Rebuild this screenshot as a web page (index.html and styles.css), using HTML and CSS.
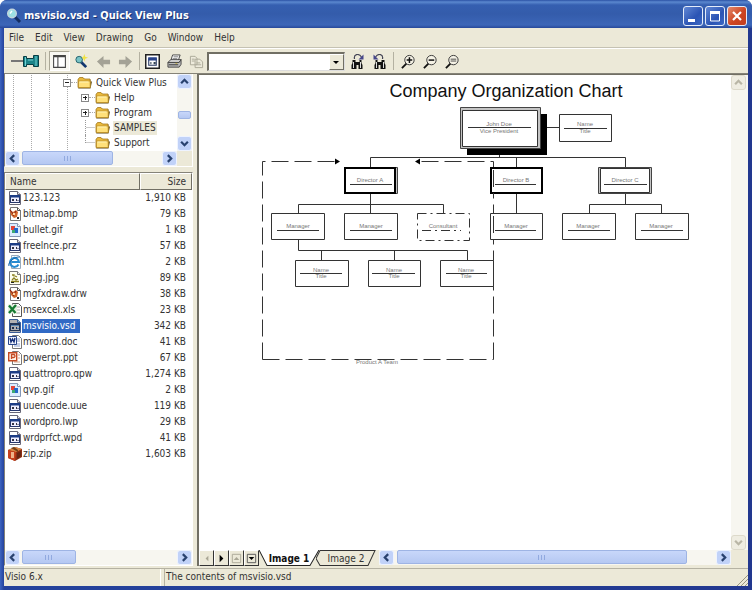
FILE: index.html
```html
<!DOCTYPE html>
<html lang="en">
<head>
<meta charset="utf-8">
<title>msvisio.vsd - Quick View Plus</title>
<link rel="stylesheet" href="styles.css">
</head>
<body>
<svg class="defs" aria-hidden="true">
  <symbol id="folder" viewBox="0 0 15 14">
    <path d="M1 3.5 2.5 2h4L8 3.5h5.5v2H15L13.500 12.500h-12L1 12z" fill="#5d4a1c"/>
    <path d="M1 3.500 2.500 1.500h3.500L7.500 3H13v8.500H1z" fill="#e9b93d" stroke="#a57a1e" stroke-width=".8"/>
    <path d="M1.500 5h11.700v6.500H1.500z" fill="#ffe07a" stroke="#b88b26" stroke-width=".8"/>
    <path d="M2.500 6h9" stroke="#fff3b8"/>
  </symbol>
  <symbol id="generic" viewBox="0 0 14 14">
    <path d="M1.500.5h8l3 3v10h-11z" fill="#fff" stroke="#667"/>
    <path d="M9.500.5v3h3" fill="#dde" stroke="#667"/>
    <rect x="2.500" y="4.500" width="9" height="7" fill="#eef" stroke="#27376c"/>
    <path d="M2 4h10v2.500H2z" fill="#1c3c86"/>
    <path d="M4 8h2v2H4zM8 8h1v2H8zM9.500 9h1v1h-1z" fill="#334"/>
  </symbol>
  <symbol id="drawing" viewBox="0 0 14 14">
    <path d="M2.500.5h7l3 3v10h-10z" fill="#fff" stroke="#777"/>
    <path d="m9.500.5v3h3" fill="none" stroke="#555"/>
    <path d="M1 1.500 5 5l3-2 2 2-1 5-3 1-3-3z" fill="#d4672a"/>
    <path d="m2 3 4 5m2-4-3 5" stroke="#722" fill="none"/>
    <path d="M5 6h2v2H5z" fill="#ffd7a5"/><path d="M9 10h2v2H9z" fill="#333"/>
  </symbol>
  <symbol id="gif" viewBox="0 0 14 14">
    <path d="M1.500.5h8l3 3v10h-11z" fill="#dcecff" stroke="#8496b5"/>
    <path d="M3 3h4v4H3z" fill="#e2453a"/><path d="M6 5h4v5H6z" fill="#2467c9"/><path d="M4 7h3v3H4z" fill="#3daa73"/><path d="M9.500.5v3h3" fill="#fff" stroke="#8496b5"/>
  </symbol>
  <symbol id="html" viewBox="0 0 14 14">
    <path d="M3.500.5h7l2 2v11h-9z" fill="#fff" stroke="#9ab"/>
    <path d="M10.500 9.500A4.500 4.500 0 1 1 11 7H3.500" fill="none" stroke="#278bd1" stroke-width="2"/>
    <path d="M1 11C-1 8 7 1 12 2" fill="none" stroke="#1c65a8"/>
  </symbol>
  <symbol id="jpg" viewBox="0 0 14 14">
    <path d="M1.500.5h8l3 3v10h-11z" fill="#fffff0" stroke="#777"/>
    <path d="M9.500.5v3h3" fill="#eee" stroke="#777"/>
    <path d="M3 10.500h8M4 9l2-2 2 2 2-1M4 4h2v1.500M7 5l2 1" fill="none" stroke="#8a801d" stroke-width="1.300"/><path d="M3 11h3v1H3z" fill="#222"/>
  </symbol>
  <symbol id="excel" viewBox="0 0 14 14">
    <path d="M4.500.5h6l3 3v10h-9z" fill="#fff" stroke="#555"/><path d="M8 4h4M8 7h4M8 10h4" stroke="#aaa"/>
    <path d="M0 1.500h9v9H0z" fill="#e3f0df"/><path d="m1 2.500 6.500 7.500M8 2 1 10" stroke="#167a32" stroke-width="2.300"/>
  </symbol>
  <symbol id="word" viewBox="0 0 14 14">
    <path d="M4.500.5h6l3 3v10h-9z" fill="#fff" stroke="#777"/><path d="M9 4h3M9 6h3M6 9h6M6 11h6" stroke="#8ba0cb"/>
    <path d="M.5 1.500h8v8h-8z" fill="#f2f5ff" stroke="#28468b"/><path d="m2 3 1 4 1.500-3L6 7l1-4" fill="none" stroke="#142f78" stroke-width="1.400"/>
  </symbol>
  <symbol id="ppt" viewBox="0 0 14 14">
    <path d="M4.500.5h6l3 3v10h-9z" fill="#fff" stroke="#777"/><path d="M10 4h2M10 7h2M6 11h6" stroke="#d3a68d"/>
    <path d="M.7 1.700h8v8h-8z" fill="#fff4ea" stroke="#c54a22" stroke-width="1.400"/><path d="M3.500 8V3.500h2a1.500 1.500 0 0 1 0 3h-2" fill="none" stroke="#c54a22" stroke-width="1.300"/>
  </symbol>
  <symbol id="zip" viewBox="0 0 14 14">
    <path d="m0 3 7-3 7 2v8l-7 4-7-3z" fill="#8f2e13"/><path d="m0 3 7-3 7 2-6 3z" fill="#d98745"/><path d="m0 3 8 2-1 9-7-3z" fill="#c7401c"/><path d="M3 5h3v6H3z" fill="#efb28a"/><path d="m9 6 4-2v5l-4 3z" fill="#662614"/><path d="m6 0 4 3v2L3 1" fill="#714019"/>
  </symbol>
  <symbol id="lens" viewBox="0 0 16 16">
    <path d="m9 9 5 5" stroke="#142d62" stroke-width="3"/><circle cx="6" cy="5.500" r="4.300" fill="#9ce0e3" stroke="#c3d6dd" stroke-width="1.400"/><path d="M4 5.500 6 3" stroke="#fff" stroke-width="1.300"/>
  </symbol>
  <symbol id="binoc" viewBox="0 0 14 15">
    <path d="M2 6h3v2h4V6h2v3l1 2v4H8v-4H6v4H1v-4l1-2z" fill="#111"/><path d="M3 8v6M10 8v6" stroke="#ddd"/>
    <path d="M4 5C3 0 8-1 11 3" fill="none" stroke="#445" stroke-width="1.200"/><path d="M13 .5v5H8z" fill="#46468a"/>
  </symbol>
  <symbol id="chev" viewBox="0 0 8 8"><path d="M5.500 1 2.500 4l3 3" fill="none" stroke="currentColor" stroke-width="2"/></symbol>
</svg>

<main class="window">
  <header class="titlebar">
    <svg class="app-icon"><use href="#lens"/></svg>
    <h1>msvisio.vsd - Quick View Plus</h1>
    <div class="caption-buttons">
      <button class="cap" aria-label="Minimize"><svg viewBox="0 0 18 18"><path d="M4 12h7v3H4z" fill="#fff"/></svg></button>
      <button class="cap" aria-label="Maximize"><svg viewBox="0 0 18 18"><path d="M4.500 5h9v9h-9z" fill="none" stroke="#fff"/><path d="M4 4h10v3H4z" fill="#fff"/></svg></button>
      <button class="cap close" aria-label="Close"><svg viewBox="0 0 18 18"><path d="m5 5 8 8m0-8-8 8" stroke="#fff" stroke-width="2.200"/></svg></button>
    </div>
  </header>

  <nav class="menubar" aria-label="Main menu">
    <button>File</button><button>Edit</button><button>View</button><button>Drawing</button><button>Go</button><button>Window</button><button>Help</button>
  </nav>

  <div class="toolbar" role="toolbar" aria-label="Tools">
    <button class="tool pin" aria-label="Keep on top"><svg viewBox="0 0 28 16"><path d="M0 8h14" stroke="#777" stroke-width="2"/><path d="M12.500 3.500h3v2h7v-3h5v11h-5v-2h-7v2h-3z" fill="#1b8489" stroke="#083e45"/><path d="M14.500 4v9M17 7h5m3-4v10" stroke="#72d0d2"/></svg></button>
    <span class="sep"></span>
    <button class="tool pressed" aria-label="Toggle panes"><svg viewBox="0 0 14 14"><path d="M1.500 1.500h11v11h-11zM5.500 1v12M1 2.500h12" fill="#fff" stroke="#444"/></svg></button>
    <button class="tool" aria-label="Find file"><svg viewBox="0 0 16 16"><path d="m7 8 6 6" stroke="#12376e" stroke-width="3"/><circle cx="5.500" cy="6" r="3.500" fill="#79c3c5" stroke="#23616c"/><path d="m11 0 1 3 3 1-3 1-1 3-1-3-2-1 2-1z" fill="#f1e343"/></svg></button>
    <button class="tool" aria-label="Back"><svg viewBox="0 0 16 16"><path d="m1 8 7-6v4h7v5H8v4z" fill="#a4a296"/></svg></button>
    <button class="tool" aria-label="Forward"><svg viewBox="0 0 16 16"><path d="m15 8-7-6v4H1v5h7v4z" fill="#a4a296"/></svg></button>
    <span class="sep tight"></span>
    <button class="tool" aria-label="View file"><svg viewBox="0 0 14 14"><path d="M.7.700h12.600v12.600H.7z" fill="#fff" stroke="#222" stroke-width="1.400"/><path d="M3.500 4.500h7v6h-7z" fill="#fff" stroke="#25365f"/><path d="M3 3h8v3H3z" fill="#28428a"/><path d="M5 7.500h1v2H5zM8 7.500h2v2H8z" fill="#345"/></svg></button>
    <button class="tool" aria-label="Print"><svg viewBox="0 0 16 16"><path d="M4 7 6 1h8l-2 6" fill="#fff" stroke="#444"/><path d="M7 3h5M6 5h5" stroke="#777"/><path d="m1 9 3-3h11l-2 3z" fill="#ddd" stroke="#444"/><path d="M1 9h12l2-3v5l-2 3H1z" fill="#bbb" stroke="#444"/><path d="M2 11.500h10" stroke="#333"/><path d="M9 10h2" stroke="#ba4"/></svg></button>
    <button class="tool" aria-label="Copy"><svg viewBox="0 0 16 16"><path d="M1.500 2.500h5l2 2v7h-7zM6.500 5.500h5l3 3v6h-8z" fill="#eeebdc" stroke="#aaa796"/><path d="M3 5.500h3M3 7.500h3M8 9.500h4M8 11.500h5" stroke="#aaa796"/></svg></button>
    <div class="combo"><select aria-label="Search text"></select><span class="combo-arrow"></span></div>
    <button class="tool" aria-label="Find next"><svg viewBox="0 0 14 15"><use href="#binoc"/></svg></button>
    <button class="tool flip" aria-label="Find previous"><svg viewBox="0 0 14 15"><use href="#binoc"/></svg></button>
    <span class="sep"></span>
    <button class="tool" aria-label="Zoom in"><svg viewBox="0 0 16 16"><path d="m1 15 5-5" stroke="#111" stroke-width="2"/><circle cx="9" cy="6.500" r="5" fill="#f5f2e5" stroke="#333"/><path d="M6 6.500h6M9 3.500v6" stroke="#111" stroke-width="1.600"/></svg></button>
    <button class="tool" aria-label="Zoom out"><svg viewBox="0 0 16 16"><path d="m1 15 5-5" stroke="#111" stroke-width="2"/><circle cx="9" cy="6.500" r="5" fill="#f5f2e5" stroke="#333"/><path d="M6 6.500h6" stroke="#111" stroke-width="1.600"/></svg></button>
    <button class="tool" aria-label="Original size"><svg viewBox="0 0 16 16"><path d="m1 15 5-5" stroke="#111" stroke-width="2"/><circle cx="9" cy="6.500" r="5" fill="#f5f2e5" stroke="#333"/><path d="M6 5.500h6M6 7.500h6" stroke="#444"/></svg></button>
  </div>

  <div class="work">
    <aside class="side">
      <section class="tree" aria-label="Folders">
        <div class="tree-view">
          <ul>
            <li class="root"><button class="box minus" aria-label="Collapse"></button><i class="stub"></i><svg><use href="#folder"/></svg><span>Quick View Plus</span></li>
            <li><button class="box plus" aria-label="Expand"></button><i class="stub"></i><svg><use href="#folder"/></svg><span>Help</span></li>
            <li><button class="box plus" aria-label="Expand"></button><i class="stub"></i><svg><use href="#folder"/></svg><span>Program</span></li>
            <li><i class="branch"></i><svg><use href="#folder"/></svg><span class="current">SAMPLES</span></li>
            <li><i class="branch last"></i><svg><use href="#folder"/></svg><span>Support</span></li>
          </ul>
        </div>
        <div class="vscroll">
          <button class="sb up" aria-label="Scroll up"><svg><use href="#chev"/></svg></button>
          <div class="track"><i class="thumb"></i></div>
          <button class="sb down" aria-label="Scroll down"><svg><use href="#chev"/></svg></button>
        </div>
        <div class="hscroll">
          <button class="sb" aria-label="Scroll left"><svg><use href="#chev"/></svg></button>
          <div class="track"><i class="thumb grip tree-thumb"></i></div>
          <button class="sb right" aria-label="Scroll right"><svg><use href="#chev"/></svg></button>
        </div>
      </section>

      <section class="files" aria-label="Files">
        <table>
          <thead><tr><th>Name</th><th class="size">Size</th></tr></thead>
          <tbody>
            <tr><td><svg><use href="#generic"/></svg><span>123.123</span></td><td>1,910 KB</td></tr>
            <tr><td><svg><use href="#drawing"/></svg><span>bitmap.bmp</span></td><td>79 KB</td></tr>
            <tr><td><svg><use href="#gif"/></svg><span>bullet.gif</span></td><td>1 KB</td></tr>
            <tr><td><svg><use href="#generic"/></svg><span>freelnce.prz</span></td><td>57 KB</td></tr>
            <tr><td><svg><use href="#html"/></svg><span>html.htm</span></td><td>2 KB</td></tr>
            <tr><td><svg><use href="#jpg"/></svg><span>jpeg.jpg</span></td><td>89 KB</td></tr>
            <tr><td><svg><use href="#drawing"/></svg><span>mgfxdraw.drw</span></td><td>38 KB</td></tr>
            <tr><td><svg><use href="#excel"/></svg><span>msexcel.xls</span></td><td>23 KB</td></tr>
            <tr class="selected"><td><svg><use href="#generic"/></svg><span>msvisio.vsd</span></td><td>342 KB</td></tr>
            <tr><td><svg><use href="#word"/></svg><span>msword.doc</span></td><td>41 KB</td></tr>
            <tr><td><svg><use href="#ppt"/></svg><span>powerpt.ppt</span></td><td>67 KB</td></tr>
            <tr><td><svg><use href="#generic"/></svg><span>quattropro.qpw</span></td><td>1,274 KB</td></tr>
            <tr><td><svg><use href="#gif"/></svg><span>qvp.gif</span></td><td>2 KB</td></tr>
            <tr><td><svg><use href="#generic"/></svg><span>uuencode.uue</span></td><td>119 KB</td></tr>
            <tr><td><svg><use href="#generic"/></svg><span>wordpro.lwp</span></td><td>29 KB</td></tr>
            <tr><td><svg><use href="#generic"/></svg><span>wrdprfct.wpd</span></td><td>41 KB</td></tr>
            <tr><td><svg><use href="#zip"/></svg><span>zip.zip</span></td><td>1,603 KB</td></tr>
          </tbody>
        </table>
        <div class="hscroll">
          <button class="sb" aria-label="Scroll left"><svg><use href="#chev"/></svg></button>
          <div class="track"><i class="thumb grip list-thumb"></i></div>
          <button class="sb right" aria-label="Scroll right"><svg><use href="#chev"/></svg></button>
        </div>
      </section>
    </aside>

    <section class="viewer" aria-label="Drawing">
      <div class="canvas">
        <svg class="chart" viewBox="199 75 531 474" width="531" height="474" role="img" aria-label="Company Organization Chart">
          <text class="chart-title" x="506" y="97">Company Organization Chart</text>
          <g class="wire">
            <path d="M499.500 155v2.500M370.500 167v-9.500h255V167M516.500 157.500V167M547 127.500h12"/>
            <path d="M370.500 194v19M298.500 213v-8.500h145v8.500M516.500 194v19M625.500 194v10.500M589.500 213v-8.500h72v8.500"/>
            <path d="M298.500 240v10.500h169v10M321.500 250.500v10M394.500 250.500v10"/>
          </g>
          <g class="team">
            <path d="M262.500 359.500v-198H336M493.500 359.500v-198H419M262.500 359.500h231"/>
          </g>
          <path d="M335 158.500v6l5-3zM420 158.500v6l-5-3z"/>
          <path d="M467 114h80v41h-80z"/>
          <path class="double" d="M460.500 107.500h80v41h-80z"/>
          <path class="box-line" d="M462.500 110.500h75v36h-75z"/>
          <path class="box-line" d="M559.500 114.500h52v27h-52zM271.500 213.500h53v26h-53zM344.500 213.500h53v26h-53zM490.500 213.500h52v26h-52zM562.500 213.500h53v26h-53zM635.500 213.500h53v26h-53zM295.500 260.500h53v26h-53zM368.500 260.500h52v26h-52zM440.500 260.500h53v26h-53z"/>
          <path class="double" d="M344.500 167.500h53v26h-53zM598.500 167.500h53v26h-53z"/>
          <path class="box-heavy" d="M345 168h50v25h-50zM491 168h51v25h-51z"/>
          <path class="box-line" d="M600.500 168.500h49v24h-49z"/>
          <path class="team" d="M493.500 170v25M493.500 216v20"/>
          <path class="box-line consultant" d="M417.500 213.500h52v27h-52z"/>
          <path class="wire" d="M468 127.500h63M564 128.500h43M350 184.500h42M495 184.500h41M604 184.500h43M277 230.500h42M350 230.500h42M495 230.500h41M568 230.500h42M641 230.500h42M300 273.500h42M372 273.500h43M446 273.500h41"/>
          <path class="wire consultant" d="M422 230.500h39"/>
          <g class="labels">
            <text x="499" y="126">John Doe</text><text x="499" y="133">Vice President</text>
            <text x="585" y="126">Name</text><text x="585" y="133">Title</text>
            <text x="370" y="182">Director A</text><text x="516" y="182">Director B</text><text x="625" y="182">Director C</text>
            <text x="298" y="228">Manager</text><text x="371" y="228">Manager</text><text x="443" y="228">Consultant</text>
            <text x="516" y="228">Manager</text><text x="588" y="228">Manager</text><text x="661" y="228">Manager</text>
            <text x="321" y="272">Name</text><text x="321" y="278">Title</text>
            <text x="394" y="272">Name</text><text x="394" y="278">Title</text>
            <text x="466" y="272">Name</text><text x="466" y="278">Title</text>
            <text x="377" y="364">Product A Team</text>
          </g>
        </svg>
      </div>
      <div class="vscroll idle">
        <button class="sb up" aria-label="Scroll up"><svg><use href="#chev"/></svg></button>
        <div class="track"></div>
        <button class="sb down" aria-label="Scroll down"><svg><use href="#chev"/></svg></button>
      </div>
      <div class="sheetbar">
        <button class="nav dim" aria-label="Previous"><svg viewBox="0 0 14 14"><path d="M9 4v6L6 7z"/></svg></button>
        <button class="nav" aria-label="Next"><svg viewBox="0 0 14 14"><path d="M5 3v8l4-4z"/></svg></button>
        <button class="nav dim" aria-label="Up"><svg viewBox="0 0 14 14"><path d="M2.500 2.500h9v9h-9z" fill="none" stroke="#aaa796"/><path d="M4 8.500h6L7 5.500z"/></svg></button>
        <button class="nav" aria-label="Down"><svg viewBox="0 0 14 14"><path class="frame" d="M2.500 2.500h9v9h-9z"/><path d="M4 5.500h6L7 8.500z"/></svg></button>
        <button class="tab active"><svg viewBox="0 0 60 15" preserveAspectRatio="none"><path d="M0 0 8 14.500h43L60 0z" fill="#fff"/><path d="M0 0 8 14.500h43L60 0" fill="none" stroke="#222"/></svg><span>Image 1</span></button>
        <button class="tab"><svg viewBox="0 0 60 15" preserveAspectRatio="none"><path d="M4 .5 0 8l4 6.500h48L59 .5z" fill="#ece9d8" stroke="#333"/></svg><span>Image 2</span></button>
        <div class="hscroll">
          <button class="sb" aria-label="Scroll left"><svg><use href="#chev"/></svg></button>
          <div class="track"><i class="thumb grip view-thumb"></i></div>
          <button class="sb right" aria-label="Scroll right"><svg><use href="#chev"/></svg></button>
        </div>
      </div>
    </section>
  </div>

  <footer class="status">
    <span class="kind">Visio 6.x</span><span class="message">The contents of msvisio.vsd</span>
    <svg class="resize" viewBox="0 0 12 12"><path d="M1 12 12 1M5 12l7-7M9 12l3-3" stroke="#98957f"/></svg>
  </footer>
</main>
</body>
</html>
```
FILE: styles.css
```css
* { box-sizing: border-box; }
body {
  margin: 0;
  font: 10px/15px "DejaVu Sans Condensed", "DejaVu Sans", sans-serif;
  color: #333;
  background: #fff;
}
button { font: inherit; color: inherit; padding: 0; margin: 0; border: 0; background: none; }
svg { display: block; flex: none; }
.defs { position: absolute; width: 0; height: 0; }

.window {
  display: flex;
  flex-direction: column;
  min-height: 100vh;
  padding: 0 4px 4px;
  background: linear-gradient(90deg, #3c64c0, #24429c 4px, #22388f);
  border-radius: 7px 7px 0 0;
  overflow: hidden;
}
.titlebar {
  display: flex;
  align-items: center;
  height: 28px;
  margin: 0 -4px;
  padding: 4px 5px 0 6px;
  background: linear-gradient(#2b52a5, #5b88cf 2px, #355fb0 5px, #345cab 14px, #3c66b8 25px, #27489a);
}
.app-icon { width: 16px; height: 16px; }
.titlebar h1 {
  flex: 1;
  margin: 0 0 0 2px;
  font-size: 11px;
  line-height: 16px;
  color: #fff;
  text-shadow: 1px 1px #17316e;
}
.caption-buttons { display: flex; gap: 2px; }
.cap {
  width: 20px;
  height: 20px;
  border: 1px solid #e4ecfa;
  border-radius: 3px;
  background: linear-gradient(135deg, #6288d4, #2b54b4 60%, #3c68c4);
}
.cap.close { background: linear-gradient(135deg, #e58a6c, #cd4522 55%, #c23f1f); }

.menubar { display: flex; height: 20px; background: #ece9d8; border-bottom: 1px solid #c5c2b3; }
.menubar button { padding: 0 5px; margin-right: 1px; line-height: 16px; }

.toolbar {
  display: flex;
  align-items: center;
  height: 26px;
  padding: 0 0 0 4px;
  background: #ece9d8;
  border-top: 1px solid #fff;
  border-bottom: 1px solid #858378;
}
.tool { display: flex; align-items: center; justify-content: center; width: 22px; height: 22px; flex: none; }
.tool svg { width: 15px; height: 15px; }
.tool.pin { width: 34px; }
.tool.pin svg { width: 28px; height: 16px; }
.tool.pressed { width: 21px; height: 20px; background: #f8f7f1; border: 1px solid #fff; border-top-color: #aaa796; border-left-color: #aaa796; }
.tool.flip svg { transform: scaleX(-1); }
.sep { width: 1px; height: 18px; margin: 0 3px; background: #b4b1a1; }
.sep.tight { margin-right: 1px; }
.combo { position: relative; width: 138px; height: 19px; flex: none; margin-right: 1px; }
.combo select {
  appearance: none;
  display: block;
  width: 100%;
  height: 100%;
  border: 1px solid #ddd;
  border-top: 2px solid #716f64;
  border-left: 2px solid #716f64;
  border-radius: 0;
  background: #fff;
}
.combo-arrow {
  position: absolute;
  right: 1px;
  top: 2px;
  bottom: 1px;
  width: 15px;
  background: #ece9d8;
  border: 1px solid #fff;
  border-right-color: #716f64;
  border-bottom-color: #716f64;
  pointer-events: none;
}
.combo-arrow::after { content: ""; position: absolute; left: 3px; top: 6px; border: 3px solid transparent; border-top-color: #000; }

.work { flex: 1; display: grid; grid-template-columns: 189px minmax(0, 1fr); gap: 4px; background: #ece9d8; padding-bottom: 2px; }
.side { display: grid; grid-template-rows: 93px 1fr; gap: 5px; min-width: 0; }
.tree {
  display: grid;
  grid-template-columns: 1fr 15px;
  grid-template-rows: 1fr 15px;
  border: 1px solid #858378;
  border-right-color: #fff;
  border-bottom-color: #fff;
  border-top: 0;
}
.tree-view {
  background:
    repeating-linear-gradient(#fff 0 1px, transparent 1px 2px),
    repeating-linear-gradient(90deg, transparent 0 8px, #aaa 8px 9px, transparent 9px 18px) 0 0 / 63px 100% no-repeat #fff;
  overflow: hidden;
}
.tree ul { list-style: none; margin: 0; padding: 1px 0 0; }
.tree li { display: flex; align-items: center; height: 15px; padding-left: 76px; }
.tree li.root { padding-left: 58px; }
.tree li svg { width: 15px; height: 14px; margin-right: 3px; }
.tree li span { padding: 0 1px; line-height: 14px; }
.tree .current { background: #ece9d8; }
.box { position: relative; width: 8px; height: 8px; border: 1px solid #888; background: #fff; }
.box::before { content: ""; position: absolute; left: 1px; top: 2px; width: 4px; height: 1px; background: #222; }
.box.plus::after { content: ""; position: absolute; left: 3px; top: 1px; width: 1px; height: 4px; background: #222; }
.stub { width: 6px; border-top: 1px dotted #aaa; }
.branch { align-self: stretch; width: 10px; margin-left: 4px; background: linear-gradient(#ccc, #ccc) 0 7px / 10px 1px no-repeat; border-left: 1px dotted #999; }
.branch.last { height: 8px; }

.vscroll { display: flex; flex-direction: column; width: 15px; background: #f7f6f0; }
.hscroll { display: flex; height: 15px; min-width: 0; background: #f7f6f0; }
.track { flex: 1; min-width: 0; }
.sb {
  display: flex;
  align-items: center;
  justify-content: center;
  flex: none;
  width: 15px;
  height: 15px;
  border: 1px solid #eef3ff;
  border-radius: 3px;
  background: #c1d2f8;
  color: #29426f;
}
.sb svg { width: 9px; height: 9px; }
.sb.up svg { transform: rotate(90deg); }
.sb.down svg { transform: rotate(-90deg); }
.sb.right svg { transform: scaleX(-1); }
.thumb { display: block; background: linear-gradient(#c8d7fa, #b5c8f2); border: 1px solid #9eb4e4; border-radius: 2px; }
.hscroll .thumb { height: 14px; }
.vscroll .thumb { height: 8px; margin: 22px 1px 0; }
.hscroll .grip { background: repeating-linear-gradient(90deg, #91a9df 0 1px, transparent 1px 3px) center / 8px 5px no-repeat, linear-gradient(#c8d7fa, #b5c8f2); }
.tree-thumb { width: 91px; margin-left: 2px; }
.list-thumb { width: 54px; margin-left: 2px; }
.view-thumb { width: 90%; margin-left: 3px; }
.idle .sb { background: #efede2; border-color: #dddacb; color: #b9b6a6; }

.files {
  display: flex;
  flex-direction: column;
  justify-content: space-between;
  background: #fff;
  border: 1px solid #858378;
  border-right-color: #fff;
  border-bottom-color: #fff;
}
.files table { width: 100%; border-collapse: separate; border-spacing: 0; table-layout: fixed; }
.files th {
  height: 17px;
  padding: 0 5px 0 4px;
  font-weight: normal;
  text-align: left;
  line-height: 15px;
  background: #ece9d8;
  border: 1px solid #fff;
  border-right-color: #716f64;
  border-bottom-color: #716f64;
}
.files th.size { width: 52px; text-align: right; }
.files td { height: 16px; padding: 0; line-height: 14px; }
.files td:first-child { display: flex; align-items: center; padding-left: 3px; }
.files td:last-child { padding-right: 6px; text-align: right; white-space: nowrap; }
.files td svg { width: 14px; height: 14px; }
.files td span { padding: 0 5px 0 1px; }
.selected span { background: #316ac5; color: #fff; }
.selected svg { filter: sepia(1) hue-rotate(180deg) saturate(3) brightness(.7); }

.viewer {
  display: grid;
  grid-template-columns: minmax(0, 1fr) 17px;
  grid-template-rows: 1fr 16px;
  border-left: 2px solid #716f64;
  border-top: 1px solid #716f64;
}
.canvas { background: #fff; overflow: hidden; }
.viewer .vscroll { width: 17px; padding-right: 2px; }
.sheetbar { display: flex; align-items: stretch; min-width: 0; }
.nav { width: 15px; background: #ece9d8; border: 1px solid #333; border-left-color: #fff; border-top-color: #fff; flex: none; }
.nav svg { fill: #000; }
.nav.dim svg { fill: #aaa796; }
.nav .frame { fill: none; stroke: #555; }
.tab { position: relative; width: 60px; flex: none; }
.tab + .tab { margin-left: -3px; }
.tab svg { position: absolute; inset: 0; width: 100%; height: 100%; }
.tab span { position: relative; }
.tab.active { z-index: 1; font-weight: bold; color: #111; }
.sheetbar .hscroll { flex: 1; margin-left: 3px; }

.chart { font-family: "Liberation Sans", Arial, sans-serif; }
.chart text { text-anchor: middle; }
.chart-title { font-size: 18px; fill: #111; }
.labels { font-size: 6px; fill: #777; }
.wire { fill: none; stroke: #333; }
.box-line { fill: #fff; stroke: #333; }
.double { fill: #c4c4c4; stroke: #444; }
.box-heavy { fill: #fff; stroke: #000; stroke-width: 2; }
.team { fill: none; stroke: #333; stroke-dasharray: 17 6; }
.consultant { stroke-dasharray: 9 4 2 4; }

.status { display: flex; height: 18px; background: #ece9d8; border-top: 1px solid #b5b2a3; line-height: 16px; }
.kind { width: 157px; border-right: 1px solid #fff; padding-left: 1px; }
.message { flex: 1; margin-left: 3px; padding-left: 1px; border-left: 1px solid #b5b2a3; }
.resize { width: 12px; height: 12px; align-self: flex-end; }
```
